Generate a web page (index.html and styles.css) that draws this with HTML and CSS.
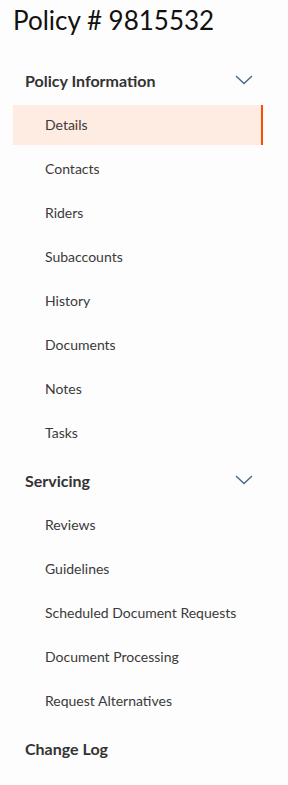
FILE: index.html
```html
<!DOCTYPE html>
<html lang="en">
<head>
<meta charset="utf-8">
<link rel="stylesheet" href="styles.css">
</head>
<body>
<aside class="sidebar">
  <h1 class="title">Policy # 9815532</h1>
  <nav class="nav">
    <section class="section">
      <div class="section-header">
        <span>Policy Information</span>
        <svg class="chevron" width="18" height="10" viewBox="0 0 18 10"><path d="M1 1 L9 8.5 L17 1" fill="none" stroke="#4a6685" stroke-width="1.4"/></svg>
      </div>
      <a class="item active">Details</a>
      <a class="item">Contacts</a>
      <a class="item">Riders</a>
      <a class="item">Subaccounts</a>
      <a class="item">History</a>
      <a class="item">Documents</a>
      <a class="item">Notes</a>
      <a class="item">Tasks</a>
    </section>
    <section class="section">
      <div class="section-header">
        <span>Servicing</span>
        <svg class="chevron" width="18" height="10" viewBox="0 0 18 10"><path d="M1 1 L9 8.5 L17 1" fill="none" stroke="#4a6685" stroke-width="1.4"/></svg>
      </div>
      <a class="item">Reviews</a>
      <a class="item">Guidelines</a>
      <a class="item">Scheduled Document Requests</a>
      <a class="item">Document Processing</a>
      <a class="item">Request Alternatives</a>
    </section>
    <section class="section">
      <div class="section-header">
        <span>Change Log</span>
      </div>
    </section>
  </nav>
</aside>
</body>
</html>
```

FILE: styles.css
```css
html, body {
  margin: 0;
  padding: 0;
  background: #fdfdfd;
}
body {
  font-family: Lato, "Open Sans", sans-serif;
  color: #333333;
}
.sidebar {
  width: 250px;
  padding: 5px 25px 0 13px;
}
.title {
  margin: 0;
  font-size: 26px;
  font-weight: 400;
  line-height: 1.2;
  color: #111111;
}
.nav {
  margin-top: 25px;
  display: flex;
  flex-direction: column;
  gap: 8px;
}
.section {
  display: flex;
  flex-direction: column;
  gap: 4px;
}
.section-header {
  height: 40px;
  box-sizing: border-box;
  display: flex;
  align-items: center;
  justify-content: space-between;
  padding: 0 10px 2px 12px;
  font-size: 16px;
  font-weight: 700;
  color: #333333;
}
.chevron {
  display: block;
}
.item {
  height: 40px;
  display: flex;
  align-items: center;
  padding-left: 32px;
  padding-bottom: 1px;
  box-sizing: border-box;
  font-size: 14px;
  color: #3a3a3a;
  text-decoration: none;
}
.item.active {
  background: #feebe1;
  border-right: 2px solid #fc4c02;
}
```
